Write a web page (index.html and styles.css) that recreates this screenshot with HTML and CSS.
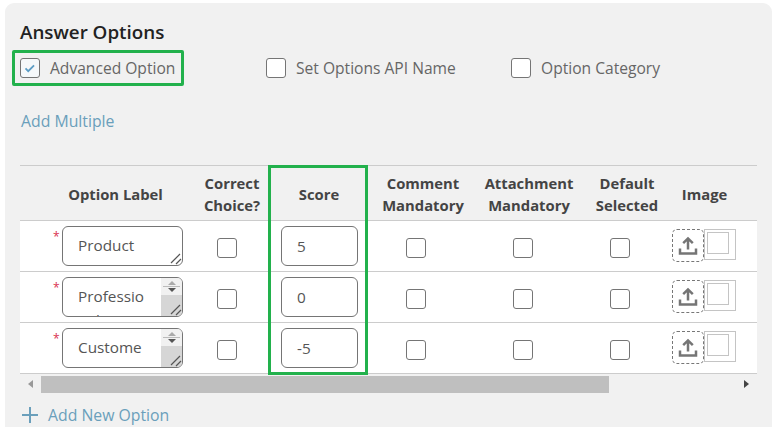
FILE: index.html
```html
<!DOCTYPE html>
<html lang="en">
<head>
<meta charset="utf-8">
<title>Answer Options</title>
<link rel="stylesheet" href="styles.css">
</head>
<body>
<section class="card">
  <h2 class="title">Answer Options</h2>
  <div class="toggles">
    <label class="toggle highlighted"><span class="box checked"><svg viewBox="0 0 20 20" width="18" height="18"><path d="M5 10.500l3 3 6.500-6.500" fill="none" stroke="#5b9cc4" stroke-width="2"/></svg></span>Advanced Option</label>
    <label class="toggle"><span class="box"></span>Set Options API Name</label>
    <label class="toggle"><span class="box"></span>Option Category</label>
  </div>
  <a class="link multiple">Add Multiple</a>
  <div class="table">
    <div class="score-mark"></div>
    <div class="row head">
      <div class="c-label">Option Label</div>
      <div>Correct<br>Choice?</div>
      <div>Score</div>
      <div>Comment<br>Mandatory</div>
      <div>Attachment<br>Mandatory</div>
      <div>Default<br>Selected</div>
      <div class="c-image">Image</div>
    </div>
    <div class="row body">
      <div class="label-cell"><span class="star">*</span><div class="area"><span class="area-text">Product</span><svg class="grip" viewBox="0 0 12 12" width="12" height="12"><path d="M1 10L10 1M6 11l5-5" stroke="#555" stroke-width="1.200"/></svg></div></div>
      <div class="check-cell"><span class="box"></span></div>
      <div class="score-cell"><div class="num">5</div></div>
      <div class="check-cell"><span class="box"></span></div>
      <div class="check-cell"><span class="box"></span></div>
      <div class="check-cell"><span class="box"></span></div>
      <div class="image-cell"><div class="upload"><svg viewBox="0 0 20 20" width="20" height="20"><path d="M10 13.500V2.500M5.200 7.200L10 2.400l4.800 4.800M2 12.500v5h16v-5" fill="none" stroke="#757575" stroke-width="2.500"/></svg></div><div class="thumb"><div class="thumb-inner"></div></div></div>
    </div>
    <div class="row body">
      <div class="label-cell"><span class="star">*</span><div class="area"><span class="area-text">Professional</span><div class="bar"><div class="bar-btn"><i class="up"></i><i class="rule"></i><i class="down"></i></div></div><svg class="grip" viewBox="0 0 12 12" width="12" height="12"><path d="M1 10L10 1M6 11l5-5" stroke="#555" stroke-width="1.200"/></svg></div></div>
      <div class="check-cell"><span class="box"></span></div>
      <div class="score-cell"><div class="num">0</div></div>
      <div class="check-cell"><span class="box"></span></div>
      <div class="check-cell"><span class="box"></span></div>
      <div class="check-cell"><span class="box"></span></div>
      <div class="image-cell"><div class="upload"><svg viewBox="0 0 20 20" width="20" height="20"><path d="M10 13.500V2.500M5.200 7.200L10 2.400l4.800 4.800M2 12.500v5h16v-5" fill="none" stroke="#757575" stroke-width="2.500"/></svg></div><div class="thumb"><div class="thumb-inner"></div></div></div>
    </div>
    <div class="row body">
      <div class="label-cell"><span class="star">*</span><div class="area"><span class="area-text">Customer Support</span><div class="bar"><div class="bar-btn"><i class="up"></i><i class="rule"></i><i class="down"></i></div></div><svg class="grip" viewBox="0 0 12 12" width="12" height="12"><path d="M1 10L10 1M6 11l5-5" stroke="#555" stroke-width="1.200"/></svg></div></div>
      <div class="check-cell"><span class="box"></span></div>
      <div class="score-cell"><div class="num">-5</div></div>
      <div class="check-cell"><span class="box"></span></div>
      <div class="check-cell"><span class="box"></span></div>
      <div class="check-cell"><span class="box"></span></div>
      <div class="image-cell"><div class="upload"><svg viewBox="0 0 20 20" width="20" height="20"><path d="M10 13.500V2.500M5.200 7.200L10 2.400l4.800 4.800M2 12.500v5h16v-5" fill="none" stroke="#757575" stroke-width="2.500"/></svg></div><div class="thumb"><div class="thumb-inner"></div></div></div>
    </div>
    <div class="scrollbar">
      <i class="arrow left"></i>
      <div class="track"><div class="thumb-bar"></div></div>
      <i class="arrow right"></i>
    </div>
  </div>
  <a class="link add-new"><svg viewBox="0 0 16 16" width="16" height="16"><path d="M8 0v16M0 8h16" stroke="#6a9fbb" stroke-width="2"/></svg>Add New Option</a>
</section>
</body>
</html>
```
FILE: styles.css
```css
html, body {
  margin: 0;
  height: 427px;
  overflow: hidden;
  background: #fff;
}
body {
  padding: 3px 4px 0 5px;
  box-sizing: border-box;
  font-family: "Open Sans", "Noto Sans", sans-serif;
  color: #555;
}
.card {
  background: #f1f1f1;
  border-radius: 9px 9px 0 0;
  height: 424px;
  padding: 16px 15px 0;
  box-sizing: border-box;
  overflow: hidden;
}
.title {
  margin: 0;
  font-size: 18.8px;
  line-height: 26px;
  font-weight: 600;
  color: #222;
}
.toggles {
  display: grid;
  grid-template-columns: 246px 245px auto;
  margin-top: 13px;
}
.toggle {
  position: relative;
  display: flex;
  align-items: center;
  gap: 10px;
  height: 20px;
  font-size: 15.6px;
  color: #666;
}
.highlighted::after {
  content: "";
  position: absolute;
  left: -8px;
  top: -8px;
  width: 172px;
  height: 36px;
  border: 3px solid #22b14c;
  box-sizing: border-box;
  border-radius: 2px;
}
.box {
  display: inline-flex;
  align-items: center;
  justify-content: center;
  flex: none;
  width: 20px;
  height: 20px;
  box-sizing: border-box;
  border: 1px solid #757575;
  border-radius: 3px;
  background: #fff;
}
.checked {
  background: #f5f8fa;
}
.link {
  display: block;
  color: #6a9fbb;
  font-size: 15.8px;
}
.multiple {
  margin-top: 33px;
  padding-left: 1px;
  line-height: 20px;
}
.table {
  position: relative;
  margin-top: 34px;
  width: 737px;
}
.score-mark {
  position: absolute;
  left: 248px;
  top: 0;
  width: 100px;
  height: 210px;
  box-sizing: border-box;
  border: 3px solid #22b14c;
}
.row {
  display: grid;
  grid-template-columns: 176px 72px 102px 106px 106px 90px 85px;
  border-top: 1px solid #ccc;
  box-sizing: border-box;
}
.head {
  height: 55px;
  padding-top: 1px;
  align-items: center;
  text-align: center;
  font-size: 14.8px;
  line-height: 22px;
  font-weight: 700;
  color: #444;
}
.c-label {
  padding-left: 15px;
}
.c-image {
  padding-right: 20px;
}
.body {
  height: 51px;
  background: #fff;
}
.label-cell {
  display: flex;
  padding: 5px 0 0 33px;
}
.star {
  width: 9px;
  font-size: 12px;
  line-height: 22px;
  color: #d9304f;
}
.area {
  position: relative;
  width: 121px;
  height: 40px;
  box-sizing: border-box;
  border: 1px solid #757575;
  border-radius: 6px;
  background: #fff;
  overflow: hidden;
}
.area-text {
  display: block;
  width: 67.5px;
  padding: 6px 0 0 15px;
  font-size: 15.3px;
  line-height: 24px;
  color: #555;
  word-break: break-all;
}
.grip {
  position: absolute;
  right: 0;
  bottom: 0;
}
.bar {
  position: absolute;
  right: 0;
  top: 0;
  bottom: 0;
  width: 21px;
  background: #d6d6d6;
}
.bar-btn {
  display: flex;
  flex-direction: column;
  align-items: center;
  justify-content: center;
  height: 17px;
  background: #f1f1f1;
}
.up, .down {
  width: 0;
  height: 0;
  border-left: 4px solid transparent;
  border-right: 4px solid transparent;
}
.up {
  border-bottom: 4px solid #aaa;
}
.down {
  border-top: 4px solid #555;
}
.rule {
  width: 17px;
  height: 1px;
  margin: 1px 0;
  background: #bbb;
}
.check-cell {
  padding: 17px 0 0;
  display: flex;
  justify-content: center;
}
.check-cell:nth-child(2) {
  padding-right: 10px;
}
.check-cell:nth-child(4) {
  padding-right: 14px;
}
.check-cell:nth-child(5) {
  padding-right: 12px;
}
.check-cell:nth-child(6) {
  padding-right: 14px;
}
.score-cell {
  padding: 5px 0 0 13px;
}
.num {
  width: 77px;
  height: 40px;
  box-sizing: border-box;
  border: 1px solid #757575;
  border-radius: 6px;
  background: #fff;
  padding-left: 15px;
  font-size: 15.3px;
  line-height: 38px;
  color: #555;
}
.image-cell {
  display: flex;
  align-items: flex-start;
  padding-top: 8px;
}
.upload {
  display: flex;
  align-items: center;
  justify-content: center;
  width: 32px;
  height: 33px;
  box-sizing: border-box;
  border: 1px dashed #777;
  border-radius: 5px;
}
.thumb {
  width: 32px;
  height: 31px;
  box-sizing: border-box;
  border: 1px solid #c4c4c4;
  padding: 2px;
}
.thumb-inner {
  width: 20px;
  height: 20px;
  border: 1px solid #c4c4c4;
}
.scrollbar {
  display: flex;
  align-items: center;
  height: 20px;
  border-top: 1px solid #ccc;
  box-sizing: border-box;
}
.arrow {
  width: 0;
  height: 0;
  border-top: 4px solid transparent;
  border-bottom: 4px solid transparent;
}
.left {
  margin-left: 8px;
  border-right: 5px solid #999;
}
.right {
  margin-right: 8px;
  border-left: 5px solid #444;
}
.track {
  flex: 1;
  height: 17px;
  margin: 2px 10px 0 8px;
}
.thumb-bar {
  width: 568px;
  height: 17px;
  background: #bfbfbf;
}
.add-new {
  display: flex;
  align-items: center;
  gap: 10px;
  margin: 12px 0 0 2px;
  line-height: 20px;
}
```
